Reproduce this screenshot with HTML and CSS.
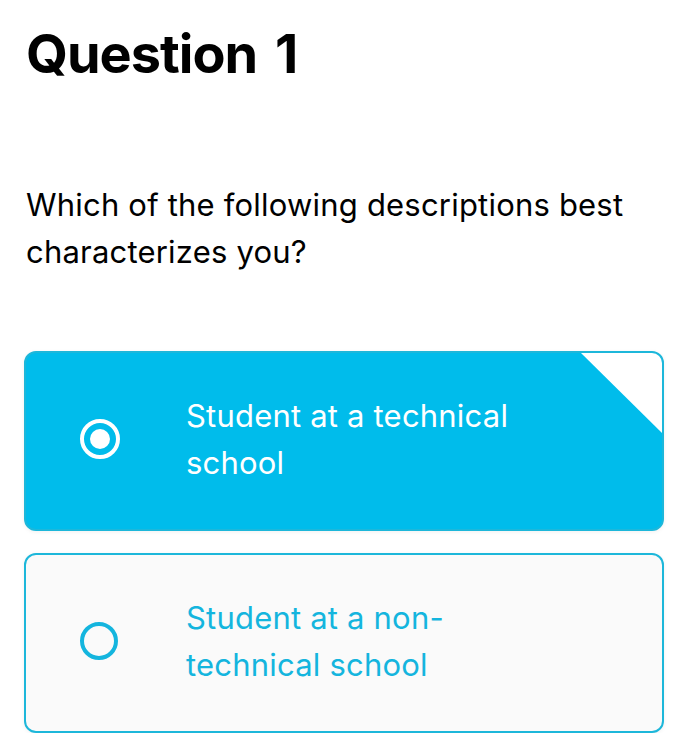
FILE: index.html
```html
<!DOCTYPE html>
<html lang="en">
<head>
<meta charset="utf-8">
<link rel="stylesheet" href="styles.css">
</head>
<body>
<main class="page">
  <h1 class="title">Question 1</h1>
  <p class="prompt">Which of the following descriptions best characterizes you?</p>
  <div class="options">
    <div class="option selected">
      <span class="radio"><span class="dot"></span></span>
      <span class="label">Student at a technical<br>school</span>
    </div>
    <div class="option">
      <span class="radio"></span>
      <span class="label">Student at a non-<br>technical school</span>
    </div>
  </div>
</main>
</body>
</html>
```

FILE: styles.css
```css
html, body {
  margin: 0;
  padding: 0;
  background: #ffffff;
}
body {
  font-family: Inter, Roboto, "Liberation Sans", sans-serif;
  color: #000;
}
.page {
  padding: 20px 17px 0 24px;
}
.title {
  margin: 0 0 0 2px;
  font-size: 54px;
  line-height: 67px;
  font-weight: 700;
  letter-spacing: -1px;
  word-spacing: 6px;
}
.prompt {
  margin: 94px 0 0 2px;
  font-size: 31px;
  line-height: 47px;
  font-weight: 400;
  letter-spacing: 0.2px;
  width: 630px;
}
.options {
  margin-top: 76px;
  display: flex;
  flex-direction: column;
  gap: 22px;
}
.option {
  position: relative;
  box-sizing: border-box;
  height: 180px;
  width: 640px;
  border: 2px solid #1db7da;
  border-radius: 12px;
  background: #fafafa;
  box-shadow: 0 1px 4px rgba(0,0,0,0.06);
  display: flex;
  align-items: center;
  padding: 0 0 5px 54px;
  overflow: hidden;
  color: #14b5de;
}
.option.selected {
  background: #00bceb;
  color: #fff;
}
.option.selected::after {
  content: "";
  position: absolute;
  top: 0;
  right: 0;
  width: 81px;
  height: 80px;
  background: #fff;
  clip-path: polygon(0 0, 100% 0, 100% 100%);
}
.radio {
  box-sizing: border-box;
  width: 38px;
  height: 38px;
  border: 4px solid #14b5de;
  border-radius: 50%;
  flex: none;
  display: flex;
  align-items: center;
  justify-content: center;
  margin-right: 68px;
}
.selected .radio {
  width: 40px;
  height: 40px;
  border-color: #fff;
  margin-right: 66px;
}
.dot {
  width: 20px;
  height: 20px;
  border-radius: 50%;
  background: #fff;
}
.label {
  font-size: 31px;
  line-height: 47px;
  letter-spacing: 0.2px;
}
```
